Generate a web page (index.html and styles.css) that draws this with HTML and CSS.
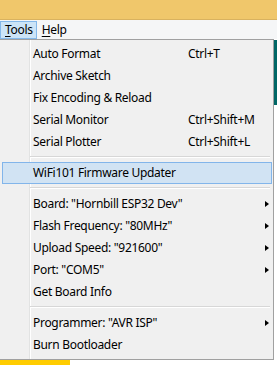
FILE: index.html
```html
<!DOCTYPE html>
<html lang="en">
<head>
    <meta charset="UTF-8">
    <title>Tools menu</title>
    <link rel="stylesheet" href="styles.css">
</head>
<body>
    <div class="titlebar"></div>
    <div class="menubar">
        <div class="menubar-item active"><u>T</u>ools</div>
        <div class="menubar-item"><u>H</u>elp</div>
    </div>
    <div class="workarea">
        <div class="menu">
            <div class="menu-item"><span class="label">Auto Format</span><span class="shortcut">Ctrl+T</span></div>
            <div class="menu-item"><span class="label">Archive Sketch</span></div>
            <div class="menu-item"><span class="label">Fix Encoding &amp; Reload</span></div>
            <div class="menu-item"><span class="label">Serial Monitor</span><span class="shortcut">Ctrl+Shift+M</span></div>
            <div class="menu-item"><span class="label">Serial Plotter</span><span class="shortcut">Ctrl+Shift+L</span></div>
            <div class="menu-sep"></div>
            <div class="menu-item selected"><span class="label">WiFi101 Firmware Updater</span></div>
            <div class="menu-sep"></div>
            <div class="menu-item"><span class="label">Board: "Hornbill ESP32 Dev"</span><span class="arrow"></span></div>
            <div class="menu-item"><span class="label">Flash Frequency: "80MHz"</span><span class="arrow"></span></div>
            <div class="menu-item"><span class="label">Upload Speed: "921600"</span><span class="arrow"></span></div>
            <div class="menu-item"><span class="label">Port: "COM5"</span><span class="arrow"></span></div>
            <div class="menu-item"><span class="label">Get Board Info</span></div>
            <div class="menu-sep"></div>
            <div class="menu-item"><span class="label">Programmer: "AVR ISP"</span><span class="arrow"></span></div>
            <div class="menu-item"><span class="label">Burn Bootloader</span></div>
        </div>
        <div class="side">
            <div class="side-teal"></div>
        </div>
    </div>
    <div class="statusbar">
        <div class="status-yellow"></div>
    </div>
</body>
</html>
```

FILE: styles.css
```css
/* Windows 8 style menu */
body {
    margin: 0;
    padding: 0;
    background-color: #ffffff;
    font-family: "Noto Sans", "Open Sans", sans-serif;
    font-size: 12px;
    letter-spacing: -0.3px;
    color: #000000;
    overflow: hidden;
}

.titlebar {
    height: 19px;
    background-color: #f0c76b;
    border-bottom: 1px solid #d9b25f;
}

.menubar {
    display: flex;
    height: 19px;
    background-color: #f5f6f7;
}

.menubar-item {
    height: 16px;
    margin-top: 1px;
    padding: 0 3px 0 4px;
    border: 1px solid transparent;
    line-height: 16px;
}

.menubar-item.active {
    background-color: #cce4f7;
    border-color: #84b8ea;
}

.menubar-item u {
    text-decoration-thickness: 1px;
    text-underline-offset: 2px;
}

.workarea {
    display: flex;
}

.menu {
    width: 273px;
    padding: 3px 0;
    background-color: #f0f0f0;
    background-image: linear-gradient(to right, transparent 29px, #e2e3e3 29px, #e2e3e3 30px, #ffffff 30px, #ffffff 31px, transparent 31px);
    border-top: 1px solid #a0a0a0;
    border-right: 1px solid #a0a0a0;
    border-bottom: 1px solid #a0a0a0;
}

.menu-item {
    display: flex;
    align-items: center;
    height: 20px;
    margin: 0 1px 0 2px;
    padding-left: 30px;
    border: 1px solid transparent;
    line-height: 20px;
    white-space: nowrap;
}

.menu-item.selected {
    background-color: #d1e3f3;
    border-color: #82b5ea;
}

.label {
    flex: 0 0 155px;
}

.shortcut {
    flex: 1;
}

.arrow {
    margin-left: auto;
    margin-right: 2px;
    width: 0;
    height: 0;
    border-top: 3.5px solid transparent;
    border-bottom: 3.5px solid transparent;
    border-left: 4px solid #000000;
}

.menu-sep {
    height: 3px;
    margin: 0 3px 5px 30px;
    border-bottom: 1px solid #d7d7d7;
    box-shadow: 0 1px 0 #ffffff;
}

.side {
    flex: 1;
    padding-top: 1px;
}

.side-teal {
    height: 65px;
    background-color: #006766;
}

.statusbar {
    height: 5px;
}

.status-yellow {
    width: 70px;
    height: 5px;
    background-color: #ffcc00;
}
```
